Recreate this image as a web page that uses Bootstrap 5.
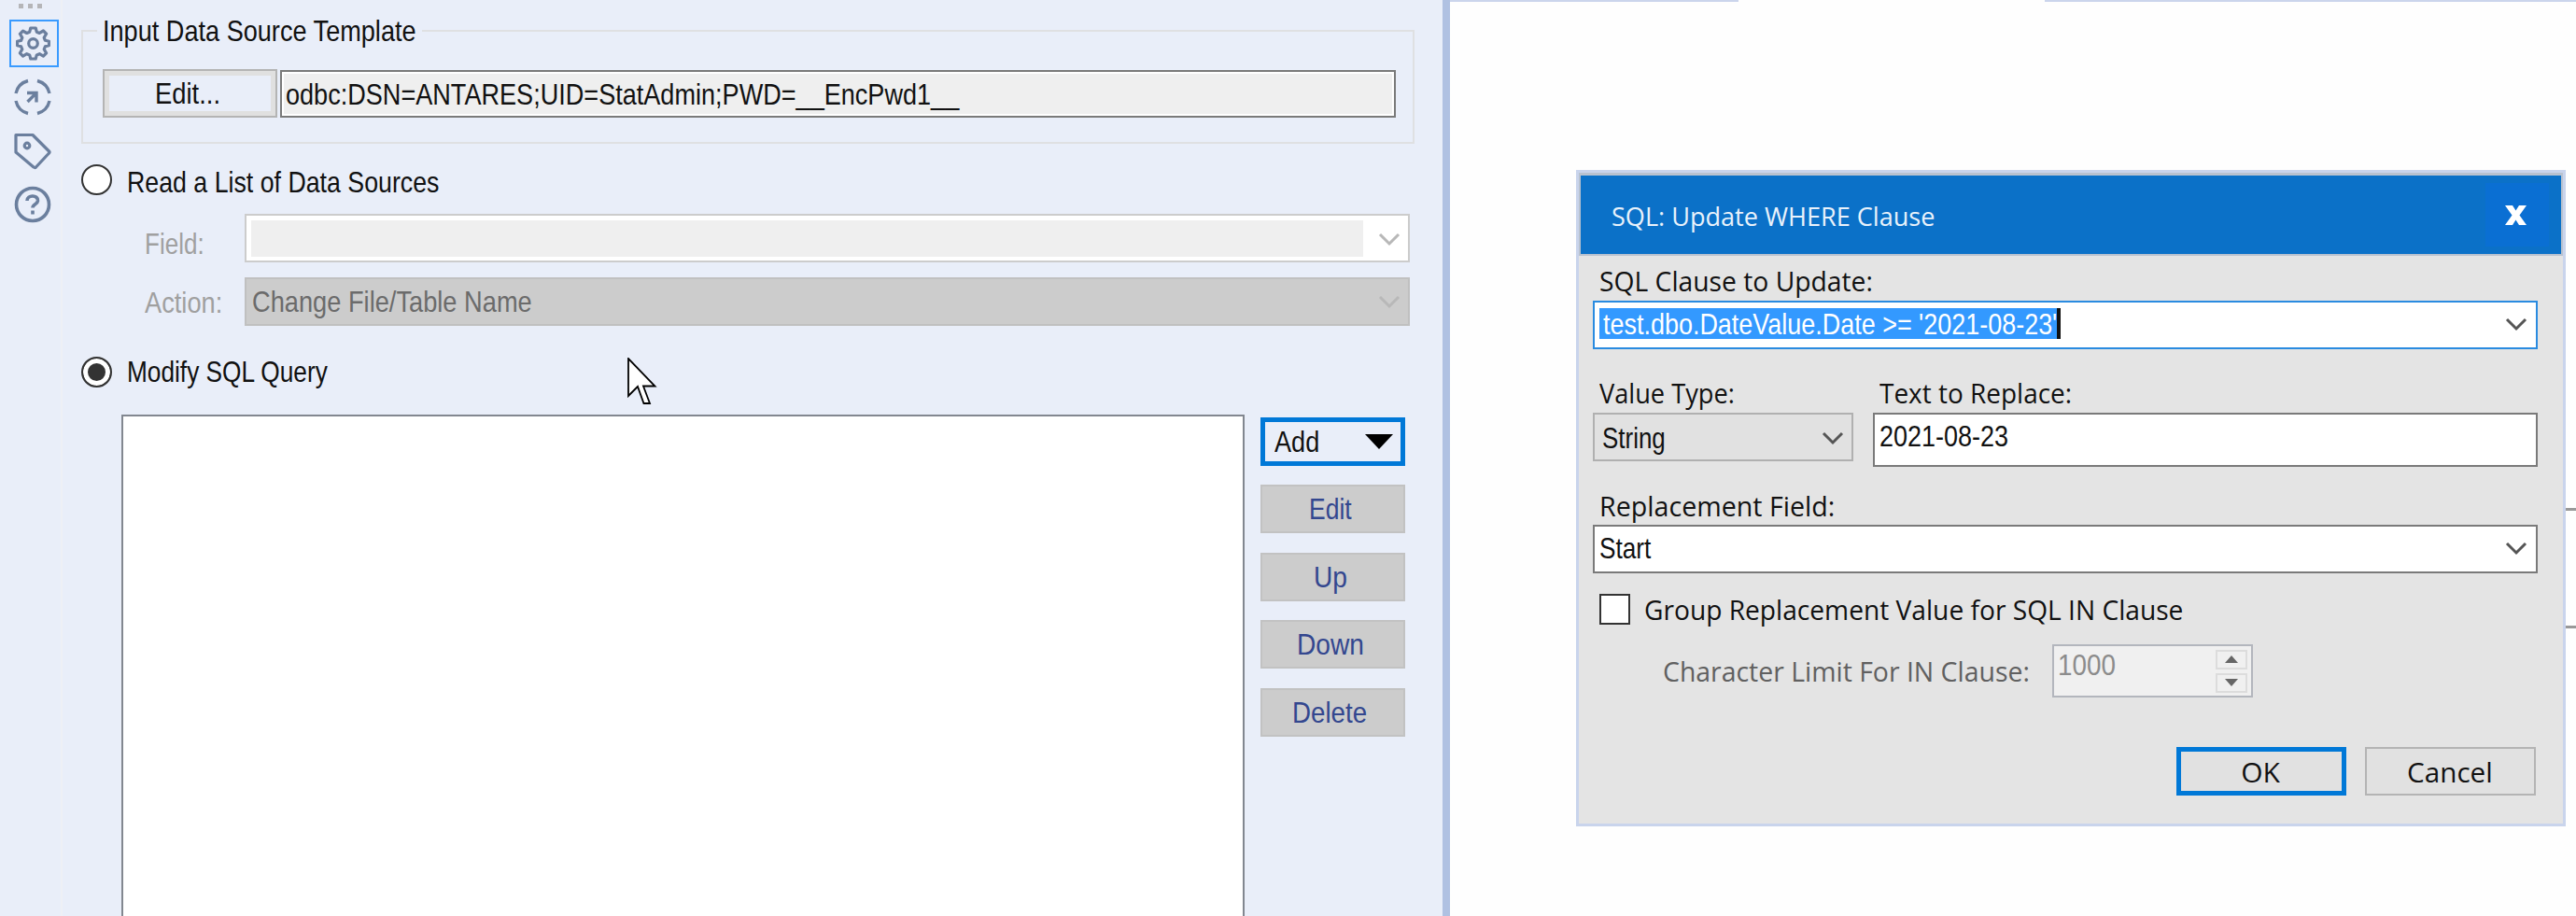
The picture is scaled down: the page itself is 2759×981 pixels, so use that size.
<!DOCTYPE html>
<html lang="en">
<head>
<meta charset="utf-8">
<title>SQL: Update WHERE Clause</title>
<link href="https://cdn.jsdelivr.net/npm/bootstrap@5.3.0/dist/css/bootstrap.min.css" rel="stylesheet">
<style>
body{width:2759px;height:981px;overflow:hidden;background:#fefefe;color:#111;font:30.5px/30px "Liberation Sans",Arial,sans-serif;}
.t{display:inline-block;flex:none;white-space:nowrap;line-height:30px;transform-origin:0 50%}
.rail{width:67px;background:#e9eef9;border-right:2px solid #eef0f5}
.rail svg{display:block}
.rail-dots{height:21px;padding:3px 0 0 18px}
.rail-item{width:53px;height:51px;margin-left:10px;display:flex;align-items:center;justify-content:center;padding-right:3px}
.rail-item + .rail-item{margin-top:6.500px}
.rail-on{border:2px solid #3a9bff}
.panel{width:1478px;background:#e9eef9;padding-left:20px}
.split-bar{width:8px;background:#b0c1e2}
fieldset{width:1428px;height:136px;margin-top:18px;border:2px solid #dfe0e2;padding:0 0 0 21px}
legend{float:none;width:auto;height:30px;font-size:inherit;line-height:31px;margin:0 0 0 -6px;padding:0 6px;display:block}
.box{border:2px solid #7a7a7a;background:#fff;height:52px;padding:0;display:flex;align-items:center;border-radius:0;flex:none}
.btn-win{height:52px;border:2px solid #b4b4b4;border-radius:0;padding:0;font:inherit;line-height:30px;color:#111;display:flex;align-items:center;justify-content:center;flex:none}
.row-source{margin-top:26px}
.edit-main{width:187px;background:#e9eef9;box-shadow:inset 0 0 0 5px #e0e0e0;padding-right:6px}
.dsn{width:1195px;height:51px;background:#efefef;box-shadow:inset 0 0 0 2px #fff;padding-left:4px;margin-left:3px}
.choice{height:33px}
.choice-list{margin-top:22px}
.choice-sql{margin-top:33px}
.dot-radio{width:33px;height:33px;border:2px solid #333;border-radius:50%;background:#fff;flex:none}
.dot-on{box-shadow:inset 0 0 0 5px #fff;background:#333}
.row-field{margin-top:20px}
.row-action{margin-top:15.500px}
.side{width:175px;padding:17px 0 0 68px;color:#a0a0a0}
.row-action .side{padding-top:12px}
.combo-off{width:1248px;border-color:#ccc;justify-content:space-between;padding-right:8px}
.combo-off .fill{width:1191px;height:39px;background:#efefef;margin-left:5px}
.combo-off .t{margin-left:6px}
.chev{width:24px;height:16px;fill:none;stroke:#555;stroke-width:3;margin-top:3px}
.chev-off{stroke:#b8b8b8}
.grey{background:#ccc;border-color:#c0c0c0;color:#6b6b6b}
.row-list{margin-top:29px}
.list{width:1203px;height:537px;border:2px solid #828790;border-bottom:0;background:#fff;margin-left:43px}
.stack{width:155px;margin:3px 0 0 17px;display:grid;gap:20.600px;align-content:start}
.stack .btn-win{background:#ccc;border-color:#c2c2c2;color:#33478f;padding-right:6px}
.stack .add{background:#e9eef9;border:5px solid #0078d7;color:#111;justify-content:space-between;padding:0 8px 0 10px}
.topline{height:2px;background:#cbd5ec}
.topline-a{width:309px}
.topline-b{width:569px}
.edge{width:11px;height:129px;border:solid #999;border-width:3px 0;right:0;top:544px}
.dialog{left:1688px;top:182px;width:1060px;height:703px;background:#e4e4e4;border:3px solid #c9d4ec;font-family:"Open Sans","Noto Sans",sans-serif;font-size:30px}
.title-bar{height:89px;background:#0b71c8;border:2px solid #b9c2cf;border-top-width:3px;color:#e9f2fb;padding:0 13px 0 33px}
.title-bar .t{font-size:27px;padding-top:3px}
.close-x{width:68px;height:68px;background:#0a6fd3;display:flex;align-items:center;justify-content:center;padding-right:3px}
.form-area{padding:0 0 0 15px}
.lb{height:30px;padding:2px 0 0 7px;display:flex;align-items:center}
.lb-first{margin-top:11px}
.lb-field{margin-top:26px}
.ls,.ls-in .t{font-family:"Liberation Sans",Arial,sans-serif;font-size:30.500px}
.wide{width:1012px;justify-content:space-between;padding:0 9px 3px 5px}
.focus-box{border-color:#2a8be0;margin-top:7px}
.field-box{margin-top:6px}
.sel{background:#39f;color:#fff;height:33px;padding-left:4px;display:flex;align-items:center;border-right:4px solid #111}
.pair{margin-top:31px}
.type-col{width:300px}
.type-box{width:279px;margin-top:7px;background:#e1e1e1;border-color:#b0b0b0;justify-content:space-between;padding:1px 8px 0}
.text-box{width:712px;height:58px;margin-top:7px;padding:0 0 9px 5px}
.check-row{margin-top:22px;height:33px}
.chk{width:33px;height:33px;border:2.500px solid #333;background:#fff;margin:0 15px 0 7px}
.limit-row{margin-top:21px;padding-left:75px;color:#606060}
.spin{width:215px;height:57px;border-color:#b3b6bd;background:#f0f0f0;color:#8c8c8c;justify-content:space-between;padding:0 4px;margin-left:24px}
.spin .t{margin-top:-13px}
.spin-b{width:34px;height:21px;border:2px solid #dcdcdc;display:flex;align-items:center;justify-content:center}
.actions{margin-top:53px;padding-left:625px;gap:20px}
.actions .btn-win{width:183px;background:#e1e1e1;padding:1px 2px 0 0}
.actions .ok{width:182px;border:5px solid #0078d7}
.cursor{left:672px;top:383px}
</style>
</head>
<body class="d-flex position-relative">
<nav class="rail flex-shrink-0">
  <div class="rail-dots"><svg width="32" height="8" fill="#b5b5b8"><path d="M2 1h5v5H2zM12 1h5v5h-5zM22 1h5v5h-5z"/></svg></div>
  <div class="rail-item rail-on">
    <svg width="37" height="37" viewBox="1.500 2 37 37" fill="none" stroke="#6b7f9e" stroke-width="3.200" stroke-linejoin="round"><path d="M17.300 4h5.400l1.100 4.200 3 1.200 4.100-2.400 3.200 3.200-2.400 4.100 1.200 3L37 18.300v4.400l-4.100 1.100-1.200 3 2.400 4.100-3.200 3.200-4.100-2.400-3 1.200-1.100 4.100h-5.400l-1.100-4.100-3-1.200-4.100 2.400-3.200-3.200 2.400-4.100-1.200-3L3 22.700v-4.400l4.100-.9 1.200-3-2.400-4.100 3.200-3.200 4.100 2.400 3-1.300z"/><circle cx="20" cy="20.500" r="4.800"/></svg>
  </div>
  <div class="rail-item"><svg width="42" height="42" viewBox="0 3 42 42" fill="none" stroke="#6b7f9e" stroke-width="3.400"><path d="M3 20A18 18 0 0 1 16 6.500M26 6.500A18 18 0 0 1 39 20M39 28A18 18 0 0 1 26 41.500M16 41.500A18 18 0 0 1 3 28M15 19.500H25v10M25 19.500 15.500 29"/></svg></div>
  <div class="rail-item"><svg width="42" height="42" viewBox="0 0 42 42" fill="none" stroke="#6b7f9e" stroke-width="3.200" stroke-linejoin="round"><path d="M3 3.500h18l17.500 17.500q1 1 0 2L24.500 38q-1 1-2.500 0L3 22z"/><circle cx="15" cy="15" r="2.800"/></svg></div>
  <div class="rail-item"><svg width="42" height="42" viewBox="0 0 42 42" fill="none" stroke="#6b7f9e" stroke-width="3.600"><circle cx="21" cy="21" r="17.500"/><path d="M15 17c0-7 12-6.500 11.500 0-.4 4-5.500 3.500-5.500 7.500M21 27.500v4"/></svg></div>
</nav>
<main class="panel flex-shrink-0">
  <fieldset>
    <legend><span class="t" data-w="336">Input Data Source Template</span></legend>
    <div class="d-flex align-items-end row-source">
      <button class="btn-win edit-main" type="button"><span class="t" data-w="70">Edit...</span></button>
      <div class="box dsn"><span class="t" data-w="721">odbc:DSN=ANTARES;UID=StatAdmin;PWD=__EncPwd1__</span></div>
    </div>
  </fieldset>
  <div class="d-flex align-items-center choice choice-list"><span class="dot-radio"></span><span class="t ms-3 pt-1" data-w="334">Read a List of Data Sources</span></div>
  <div class="d-flex row-field">
    <div class="side"><span class="t" data-w="64">Field:</span></div>
    <div class="box combo-off"><span class="fill"></span><svg class="chev chev-off"><path d="M2 2l10 10L22 2"/></svg></div>
  </div>
  <div class="d-flex row-action">
    <div class="side"><span class="t" data-w="83">Action:</span></div>
    <div class="box combo-off grey"><span class="t" data-w="300">Change File/Table Name</span><svg class="chev chev-off"><path d="M2 2l10 10L22 2"/></svg></div>
  </div>
  <div class="d-flex align-items-center choice choice-sql"><span class="dot-radio dot-on"></span><span class="t ms-3" data-w="215">Modify SQL Query</span></div>
  <div class="d-flex row-list">
    <div class="list"></div>
    <div class="stack">
      <button class="btn-win add" type="button"><span class="t" data-w="48">Add</span><svg width="30" height="16"><path d="M0 0h30L15 16z"/></svg></button>
      <button class="btn-win" type="button"><span class="t" data-w="46">Edit</span></button>
      <button class="btn-win" type="button"><span class="t" data-w="36">Up</span></button>
      <button class="btn-win" type="button"><span class="t" data-w="72">Down</span></button>
      <button class="btn-win" type="button"><span class="t" data-w="80">Delete</span></button>
    </div>
  </div>
</main>
<div class="split-bar flex-shrink-0"></div>
<section class="flex-grow-1 d-flex justify-content-between">
  <div class="topline topline-a"></div>
  <div class="topline topline-b"></div>
</section>
<div class="edge position-absolute"></div>

<div class="dialog position-absolute">
  <div class="title-bar d-flex align-items-center justify-content-between">
    <span class="t" data-w="346">SQL: Update WHERE Clause</span>
    <span class="close-x"><svg width="23" height="21" viewBox="0 0 23 21" fill="#fff"><path d="M0 0h8l3.500 5.500L15 0h8l-7.500 10.500L23 21h-8l-3.500-5.500L8 21H0l7.500-10.500z"/></svg></span>
  </div>
  <div class="form-area">
    <div class="lb lb-first"><span class="t" data-w="293">SQL Clause to Update:</span></div>
    <div class="box wide focus-box">
      <span class="sel ls"><span class="t" data-w="486">test.dbo.DateValue.Date &gt;= '2021-08-23'</span></span>
      <svg class="chev"><path d="M2 2l10 10L22 2"/></svg>
    </div>
    <div class="d-flex pair">
      <div class="type-col"><div class="lb"><span class="t" data-w="145">Value Type:</span></div>
        <div class="box ls type-box"><span class="t" data-w="68">String</span><svg class="chev"><path d="M2 2l10 10L22 2"/></svg></div></div>
      <div><div class="lb"><span class="t" data-w="206">Text to Replace:</span></div>
        <div class="box ls text-box"><span class="t" data-w="138">2021-08-23</span></div></div>
    </div>
    <div class="lb lb-field"><span class="t" data-w="252">Replacement Field:</span></div>
    <div class="box wide ls field-box"><span class="t" data-w="55">Start</span><svg class="chev"><path d="M2 2l10 10L22 2"/></svg></div>
    <div class="d-flex align-items-center check-row"><span class="chk"></span><span class="t" data-w="577">Group Replacement Value for SQL IN Clause</span></div>
    <div class="d-flex align-items-center limit-row"><span class="t" data-w="393">Character Limit For IN Clause:</span>
      <div class="box spin ls"><span class="t" data-w="62">1000</span>
        <span class="d-grid gap-1"><span class="spin-b"><svg width="14" height="8" fill="#666"><path d="M0 8 7 0l7 8z"/></svg></span><span class="spin-b"><svg width="14" height="8" fill="#666"><path d="M0 0h14L7 8z"/></svg></span></span></div>
    </div>
    <div class="d-flex actions">
      <button class="btn-win ok" type="button"><span class="t" data-w="42">OK</span></button>
      <button class="btn-win" type="button"><span class="t" data-w="92">Cancel</span></button>
    </div>
  </div>
</div>
<svg class="cursor position-absolute" width="34" height="52" fill="#fff" stroke="#000" stroke-width="1.800"><path d="M1 1v40l10-10 6.500 18H24l-7-18.500h12.500z"/></svg>
<script src="https://cdn.jsdelivr.net/npm/bootstrap@5.3.0/dist/js/bootstrap.bundle.min.js"></script>
<script>
// Condense each label to its data-w advance width
document.querySelectorAll('[data-w]').forEach(function(e){
  var n=e.offsetWidth,w=+e.dataset.w;
  e.style.transform='scaleX('+w/n+')';
  e.style.marginRight=(w-n)+'px';
});
</script>
</body>
</html>
